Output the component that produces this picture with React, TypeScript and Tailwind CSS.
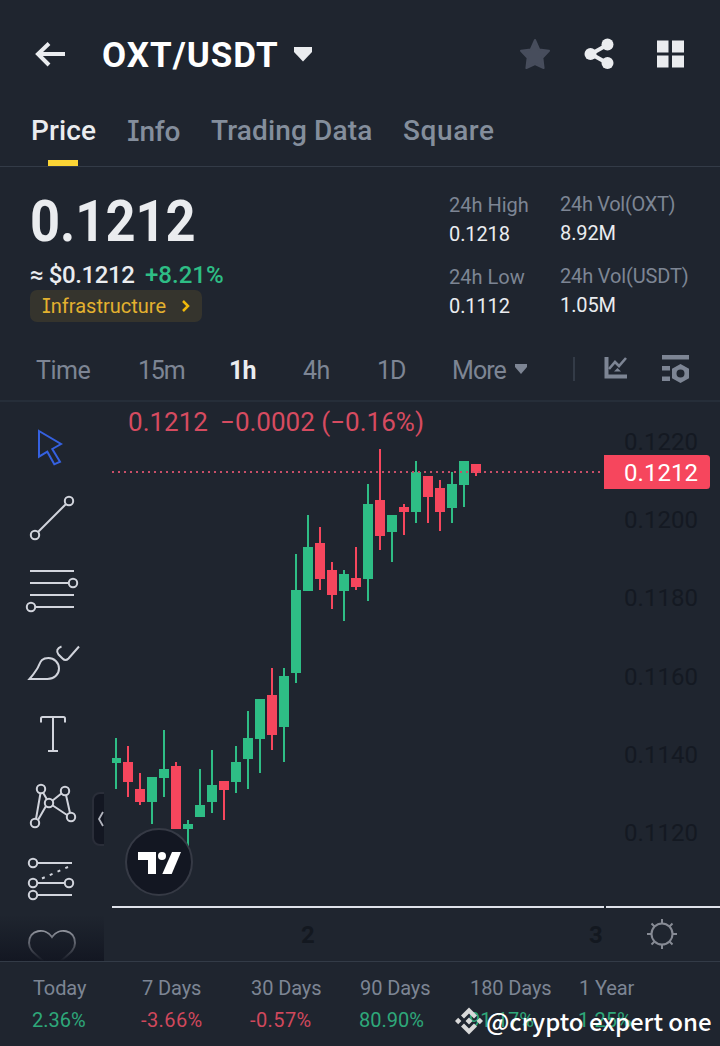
import React from "react";

const UP = "#2ebd85";
const DOWN = "#f6465d";

// [wick top, wick bottom, body top, body bottom, rising]
const candles: [number, number, number, number, boolean][] = [
  [738, 789, 758, 763, true],
  [746, 797, 762, 782, false],
  [773, 805, 789, 802, false],
  [777, 824, 777, 802, true],
  [730, 797, 769, 778, true],
  [762, 829, 766, 829, false],
  [820, 850, 824, 829, true],
  [769, 817, 805, 817, true],
  [750, 813, 785, 802, true],
  [781, 820, 781, 790, false],
  [746, 793, 762, 782, true],
  [711, 789, 738, 759, true],
  [699, 773, 699, 739, true],
  [668, 750, 695, 735, false],
  [668, 762, 676, 727, true],
  [554, 683, 590, 673, true],
  [515, 591, 547, 591, true],
  [527, 590, 543, 579, false],
  [562, 609, 570, 595, false],
  [570, 621, 574, 591, true],
  [547, 590, 578, 587, false],
  [484, 601, 504, 579, true],
  [449, 550, 500, 536, false],
  [515, 562, 515, 532, true],
  [504, 535, 507, 512, false],
  [461, 523, 472, 512, true],
  [476, 523, 476, 497, false],
  [480, 531, 488, 512, false],
  [472, 523, 484, 508, true],
  [461, 507, 461, 485, true],
  [464, 476, 464, 473, false],
];

const priceTicks = [
  ["0.1220", 450],
  ["0.1200", 528],
  ["0.1180", 606],
  ["0.1160", 685],
  ["0.1140", 763],
  ["0.1120", 841],
] as const;

function CapitalI() {
  return <span className="font-['Inter'] [font-feature-settings:'cv08']">I</span>;
}

function Header() {
  return (
    <header className="flex h-[108px] items-center pl-[34px] pr-[35px]">
      <svg width="32" height="26" viewBox="0 0 32 26" fill="none" stroke="#eaecef" strokeWidth="4">
        <path d="M31 13H4M15 2.5L4 13l11 11" />
      </svg>
      <h1 className="ml-[36px] w-[177px] whitespace-nowrap pt-[3px] font-['Roboto'] text-[35px] font-bold leading-none tracking-[1px] text-white">
        OXT/USDT
      </h1>
      <svg className="ml-[15px]" width="18" height="15" viewBox="0 0 18 15" fill="#eaecef">
        <path d="M0 0H18V5L9 14.5L0 5Z" />
      </svg>
      <div className="ml-auto flex items-center">
        <svg width="32" height="32" viewBox="0 0 32 32" fill="#474d5c" stroke="#474d5c" strokeWidth="2" strokeLinejoin="round">
          <path d="M16 2l4.200 9.400 9.800 1.400-6.600 7 1.200 10.200L16 26l-8.600 4 1.200-10.200-6.600-7 9.800-1.400z" />
        </svg>
        <svg className="ml-[33px]" width="32" height="32" viewBox="0 0 32 32" fill="#eaecef">
          <path d="M23 7L7 16l16 9" fill="none" stroke="#eaecef" strokeWidth="4" />
          <circle cx="23.5" cy="6.5" r="6" />
          <circle cx="6.5" cy="16" r="6" />
          <circle cx="23.5" cy="25" r="6" />
        </svg>
        <svg className="ml-[41px]" width="28" height="28" viewBox="0 0 28 28" fill="#eaecef">
          <path d="M-0.500 0.500h12v12h-12zM15 0.500h12v12h-12zM-0.500 15.500h12v12h-12zM15 15.500h12v12h-12z" />
        </svg>
      </div>
    </header>
  );
}

function Tabs() {
  return (
    <nav className="flex h-[59px] border-b border-[#333b47] font-['Roboto'] text-[28px] font-medium leading-[46px] text-[#848e9c]">
      <div className="ml-[31px] flex w-[65px] flex-col whitespace-nowrap tracking-[0.1px] text-[#eaecef]">
        <span className="h-[52px]">Price</span>
        <span className="ml-[17px] h-[6px] w-[30px] bg-[#fcd535]" />
      </div>
      <span className="ml-[31px] w-[53px] whitespace-nowrap tracking-[-0.2px]"><CapitalI />nfo</span>
      <span className="ml-[31px] w-[161px] whitespace-nowrap tracking-[0.15px]">Trading Data</span>
      <span className="ml-[31px] whitespace-nowrap tracking-[0.6px]">Square</span>
    </nav>
  );
}

function Stat({ label, value, className = "" }: { label: string; value: string; className?: string }) {
  return (
    <div className="h-[72px] whitespace-nowrap">
      <div className={`text-[20px] leading-[28px] text-[#7d8594] ${className}`}>{label}</div>
      <div className="text-[20px] leading-[30px] tracking-[-0.1px] text-[#eaecef]">{value}</div>
    </div>
  );
}

function Summary() {
  return (
    <section className="flex h-[173px] font-['Roboto']">
      <div className="w-[449px] pl-[30px] pt-[23px]">
        <div className="w-fit origin-left scale-x-[0.92] text-[57px] font-bold leading-[64px] text-[#eaecef]">0.1212</div>
        <div className="mt-[7px] flex h-[28px] items-center whitespace-nowrap text-[24px] font-medium text-[#eaecef]">
          <span className="w-[115px] tracking-[-0.4px]">≈ $0.1212</span>
          <span className="text-[#2ebd85]">+8.21%</span>
        </div>
        <div className="mt-[1px] flex h-[32px] w-[172px] items-center rounded-[7px] bg-[#35342d] pl-[12px] text-[20px] text-[#e3b12f]">
          <span className="w-[138px] whitespace-nowrap"><CapitalI />nfrastructure</span>
          <svg width="12" height="14" viewBox="0 0 12 14" fill="none" stroke="#f0b90b" strokeWidth="2.500">
            <path d="M3 2l5 5-5 5" />
          </svg>
        </div>
      </div>
      <div className="w-[111px] pt-[24px]">
        <Stat label="24h High" value="0.1218" />
        <Stat label="24h Low" value="0.1112" />
      </div>
      <div className="pt-[23px]">
        <Stat label="24h Vol(OXT)" value="8.92M" className="tracking-[-0.3px]" />
        <Stat label="24h Vol(USDT)" value="1.05M" className="tracking-[-0.15px]" />
      </div>
    </section>
  );
}

function Intervals() {
  return (
    <div className="flex h-[62px] items-center whitespace-nowrap border-b-2 border-[#262e39] pl-[36px] pt-[1px] font-['Roboto'] text-[25px] text-[#7d8594]">
      <span className="w-[102px] tracking-[-0.5px]">Time</span>
      <span className="w-[91px] tracking-[-1.2px]">15m</span>
      <span className="w-[74px] font-bold tracking-[-0.9px] text-[#eaecef]">1h</span>
      <span className="w-[74px] tracking-[-0.5px]">4h</span>
      <span className="w-[75px] tracking-[-1px]">1D</span>
      <span className="w-[62px] tracking-[-0.9px]">More</span>
      <svg className="mb-[4px]" width="14" height="12" viewBox="0 0 14 12" fill="#7d8594">
        <path d="M1 1H13V4L7 11L1 4Z" />
      </svg>
      <span className="mb-[4px] ml-[45px] h-[24px] w-[2px] bg-[#333b47]" />
      <svg className="mb-[5px] ml-[29px]" width="24" height="24" viewBox="0 0 24 24" fill="none" stroke="#7d8594">
        <path d="M2.500 1V20.500H23" strokeWidth="4" />
        <path d="M5 13l6-7 4 4 7-8" strokeWidth="2.600" />
        <path d="M10 15.500l3.500-3.500 3.500 3.500z" fill="#7d8594" stroke="none" />
      </svg>
      <svg className="mb-[3px] ml-[33px]" width="30" height="30" viewBox="0 0 30 30" fill="#7d8594">
        <path d="M1 1h27v4.500H1zM1 12h8v4.500H1zM1 22.500h8V27H1z" />
        <path fillRule="evenodd" d="M19.500 10l8.500 4.700v9.600L19.500 29 11 24.300v-9.600zM19.500 15.500a4 4 0 1 0 0 8 4 4 0 0 0 0-8z" />
      </svg>
    </div>
  );
}

function Tool({ children }: { children: React.ReactNode }) {
  return (
    <svg className="shrink-0" width="104" height="72" viewBox="0 0 104 72" fill="none" stroke="#d1d4dc" strokeWidth="2">
      {children}
    </svg>
  );
}

function Toolbar() {
  return (
    <aside className="relative flex h-[559px] w-[104px] flex-col overflow-hidden pt-[9px]">
      <Tool>
        <path stroke="#3561e0" d="M39 20L61 33L52.300 38L60 50.700L54.300 53.300L47.300 40.700L39 45.700Z" />
      </Tool>
      <Tool>
        <circle cx="69" cy="18" r="4.200" />
        <circle cx="35" cy="52" r="4.200" />
        <path d="M66 21L38 49" />
      </Tool>
      <Tool>
        <path d="M30 16H74M30 28H69M30 40H74M35 52H74" />
        <circle cx="73" cy="28" r="4.200" />
        <circle cx="31" cy="52" r="4.200" />
      </Tool>
      <Tool>
        <path d="M29.500 52H47.500C54 52 59 47.500 59 41.500C59 35.500 54 31 48.500 31C39.500 31 40.500 37 37 42Q33.500 47.500 29.500 52Z" />
        <path d="M61.500 19.500C57 21 56 24.500 58.500 27.500L62.500 31.500C64.500 33.500 66.500 33.500 68.500 31.500L79 19.500" />
      </Tool>
      <Tool>
        <path d="M41 23.500V19.500Q41 18 42.500 18H63.500Q65 18 65 19.500V23.500M53 18V52M48 52H58" />
      </Tool>
      <Tool>
        <path d="M43 21.500L47 28.500M62 22L52 30M66 24L70 42M40.500 22L36 48M38 49L46 35M52 34L67 44" />
        <circle cx="41" cy="18" r="4.200" />
        <circle cx="65" cy="20" r="4.200" />
        <circle cx="49" cy="32" r="4.200" />
        <circle cx="71" cy="46" r="4.200" />
        <circle cx="35" cy="52" r="4.200" />
      </Tool>
      <Tool>
        <path d="M37 20H72M37 40H65M37 52H72" />
        <path d="M42 35.500L68 24" strokeDasharray="3 5.500" />
        <circle cx="33" cy="20" r="4.200" />
        <circle cx="33" cy="40" r="4.200" />
        <circle cx="69" cy="40" r="4.200" />
        <circle cx="33" cy="52" r="4.200" />
      </Tool>
      <Tool>
        <path d="M52 22C45 12 29 14.500 29 28C29 36 36 39 52 54C68 39 75 36 75 28C75 14.500 59 12 52 22Z" />
      </Tool>
      <div className="absolute bottom-0 left-0 h-[46px] w-full bg-linear-to-b from-[#131722]/0 to-[#131722]" />
      <div className="absolute left-[92px] top-[390px] h-[54px] w-[20px] rounded-[8px] border-2 border-[#2a2e39] bg-[#131722]">
        <svg width="14" height="50" viewBox="0 0 14 50" fill="none" stroke="#b2b5be" strokeWidth="1.800">
          <path d="M9 18L5 25L9 32" />
        </svg>
      </div>
    </aside>
  );
}

function Chart() {
  return (
    <svg width="616" height="559" viewBox="104 402 616 559" fontFamily="Roboto, sans-serif">
      <text x="128" y="431" fontSize="26" fill="#d64b60" textLength="80" lengthAdjust="spacingAndGlyphs">0.1212</text>
      <text x="220" y="431" fontSize="26" fill="#d64b60" textLength="204" lengthAdjust="spacingAndGlyphs">−0.0002 (−0.16%)</text>
      {priceTicks.map(([label, y]) => (
        <text key={label} x="624" y={y} fontSize="24" fill="#141922" textLength="74">{label}</text>
      ))}
      {candles.map(([high, low, top, bottom, rising], i) => {
        const x = 116 + i * 12;
        const color = rising ? UP : DOWN;
        const left = Math.max(112, x - 5);
        return (
          <g key={x} fill={color}>
            <rect x={x - 1} y={high} width="2" height={low - high} />
            <rect x={left} y={top} width={x + 5 - left} height={bottom - top} />
          </g>
        );
      })}
      <path d="M112 472H602" stroke="#c94f68" strokeWidth="2" strokeDasharray="2 4" />
      <path d="M604 455H706.500Q710 455 710 458.500V485.500Q710 489 706.500 489H604Z" fill={DOWN} />
      <text x="624" y="481" fontSize="24" fill="#fff" textLength="74">0.1212</text>
      <circle cx="159" cy="862" r="33" fill="#131722" stroke="#363a45" strokeWidth="2" />
      <g fill="#fff">
        <path d="M138 852H156V874H148V860H138Z" />
        <circle cx="162" cy="856" r="4" />
        <path d="M172 852H181L171.700 874H162.300Z" />
      </g>
      <path d="M112 907H604M606 907H720" stroke="#dfe2ea" strokeWidth="2" />
      <g fontSize="24" fontWeight="700" fill="#131820" textAnchor="middle">
        <text x="308" y="943">2</text>
        <text x="596" y="943">3</text>
      </g>
      <g fill="none" stroke="#868a94" strokeWidth="2">
        <circle cx="662" cy="934" r="10.500" />
        <path d="M662 919v4M662 945v4M647 934h4M673 934h4M651.500 923.500l3 3M669.500 941.500l3 3M672.500 923.500l-3 3M654.500 941.500l-3 3" />
      </g>
    </svg>
  );
}

function Period({ label, value, className }: { label: string; value: string; className: string }) {
  return (
    <div className={`flex flex-col whitespace-nowrap ${className}`}>
      <span className="h-[32px] pl-[1px] text-[20px] leading-[28px] tracking-[-0.1px] text-[#7d8594]">{label}</span>
      <span className="text-[20px] leading-[29px]">{value}</span>
    </div>
  );
}

function Performance() {
  return (
    <footer className="relative flex h-[85px] border-t border-[#333b47] pl-[32px] pt-[12px] font-['Roboto']">
      <Period label="Today" value="2.36%" className="w-[109px] text-[#2ea87a]" />
      <Period label="7 Days" value="-3.66%" className="w-[109px] tracking-[0.4px] text-[#d0485c]" />
      <Period label="30 Days" value="-0.57%" className="w-[109px] tracking-[0.4px] text-[#d0485c]" />
      <Period label="90 Days" value="80.90%" className="w-[110px] text-[#2ea87a]" />
      <Period label="180 Days" value="91.17%" className="w-[109px] text-[#2ea87a]" />
      <Period label="1 Year" value="1.25%" className="text-[#2ea87a]" />
      <div className="absolute left-[455px] top-[43px] flex h-[32px] items-center whitespace-nowrap">
        <svg width="28" height="28" viewBox="0 0 28 28" fill="#d9d9d9">
          <path d="M14 0.500L22 8.500L19 11.500L14 6.500L9 11.500L6 8.500ZM14 27.500L22 19.500L19 16.500L14 21.500L9 16.500L6 19.500ZM3.200 10.800L6.400 14L3.200 17.200L0 14ZM24.800 10.800L28 14L24.800 17.200L21.600 14ZM14 10.500L17.500 14L14 17.500L10.500 14Z" />
        </svg>
        <span className="ml-[3px] font-['Noto_Sans_CJK_SC'] text-[24px] font-medium leading-[32px] text-white">@crypto expert one</span>
      </div>
    </footer>
  );
}

export default function App() {
  return (
    <main className="h-[1046px] w-[720px] overflow-hidden bg-[#1f252f] font-['Roboto']">
      <Header />
      <Tabs />
      <Summary />
      <Intervals />
      <div className="flex h-[559px]">
        <Toolbar />
        <Chart />
      </div>
      <Performance />
    </main>
  );
}
